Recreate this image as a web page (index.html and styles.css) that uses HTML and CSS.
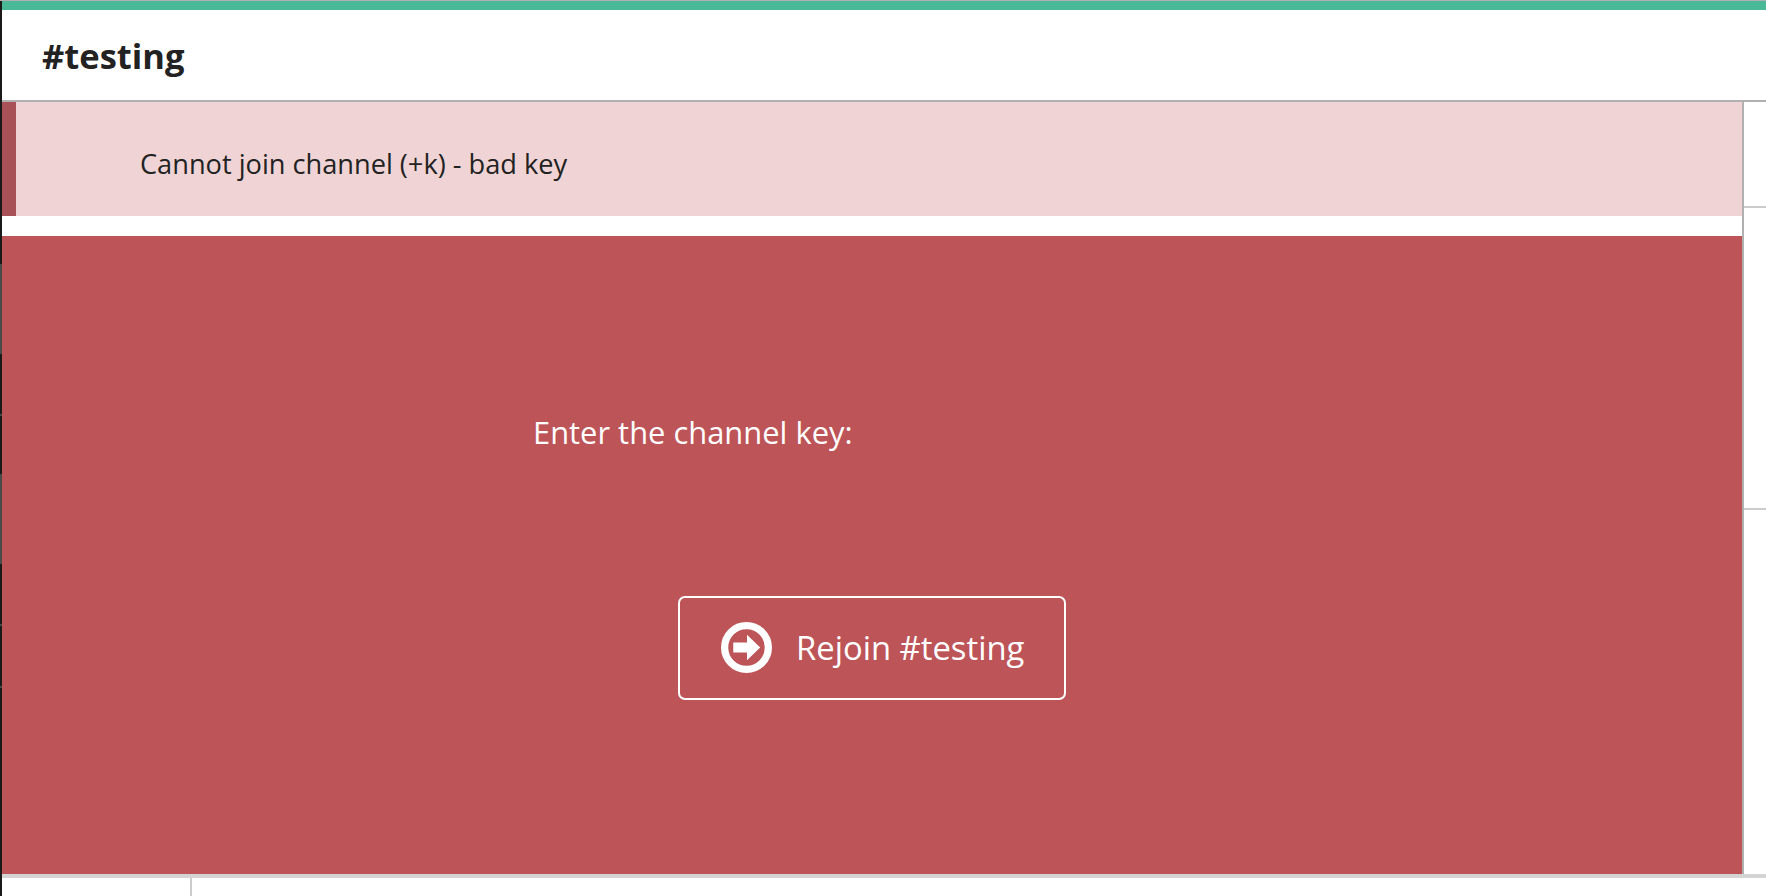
FILE: index.html
```html
<!DOCTYPE html>
<html lang="en">

<head>
    <meta charset="UTF-8">
    <meta name="viewport" content="width=device-width, initial-scale=1.0">
    <title>#testing</title>
    <link rel="stylesheet" href="styles.css">
</head>

<body>

    <div class="rail">
        <div class="rail-seg h44"></div>
        <div class="rail-seg lit h90"></div>
        <div class="rail-seg h60"></div>
        <div class="rail-seg lit h2"></div>
        <div class="rail-seg h58"></div>
        <div class="rail-seg lit h90"></div>
        <div class="rail-seg h60"></div>
        <div class="rail-seg lit h2"></div>
        <div class="rail-seg h60"></div>
        <div class="rail-seg lit h2"></div>
    </div>

    <div class="main">
        <header class="channel-header">
            <h1>#testing</h1>
        </header>

        <div class="channel-body">
            <section class="messages">
                <div class="message">
                    <p>Cannot join channel (+k) - bad key</p>
                </div>

                <div class="key-panel">
                    <p class="key-label">Enter the channel key:</p>
                    <button class="rejoin" type="button">
                        <svg class="rejoin-icon" viewBox="0 0 52 52" aria-hidden="true">
                            <circle cx="26" cy="26" r="22.300" fill="none" stroke="#fff" stroke-width="7.400" />
                            <path d="M12.500 21h14v-8l13.500 13-13.500 13v-8h-14z" fill="#fff" />
                        </svg>
                        <span>Rejoin #testing</span>
                    </button>
                </div>
            </section>

            <aside class="side">
                <div class="side-row first"></div>
                <div class="side-row second"></div>
                <div class="side-row"></div>
            </aside>
        </div>

        <footer class="controls">
            <div class="nick"></div>
            <div class="input"></div>
        </footer>
    </div>

</body>

</html>
```

FILE: styles.css
```css
* {
    margin: 0;
    padding: 0;
    box-sizing: border-box;
}

body {
    font-family: "Open Sans", Lato, sans-serif;
    background-color: #fff;
    color: #222;
    display: flex;
    height: 100vh;
    overflow: hidden;
    border-top: 1px solid #b0b0b0;
}

.rail {
    width: 2px;
    background-color: #1c1a19;
    padding-top: 219px;
    display: flex;
    flex-direction: column;
}

.rail-seg {
    background-color: #1c1a19;
}

.rail-seg.lit {
    background-color: #4a4a4a;
}

.h44 { height: 44px; }
.h90 { height: 90px; }
.h60 { height: 60px; }
.h58 { height: 58px; }
.h2 { height: 2px; }

.main {
    flex: 1;
    display: flex;
    flex-direction: column;
    min-width: 0;
}

.channel-header {
    height: 101px;
    border-top: 9px solid #4ab997;
    border-bottom: 2px solid #b0b0b0;
    padding-left: 40px;
    display: flex;
    align-items: center;
}

.channel-header h1 {
    font-size: 34.500px;
    font-weight: 700;
    color: #222;
}

.channel-body {
    flex: 1;
    display: flex;
    min-height: 0;
}

.messages {
    width: 1740px;
    display: flex;
    flex-direction: column;
}

.message {
    height: 114px;
    background-color: #f0d4d5;
    border-left: 14px solid #a85156;
    padding: 8px 0 0 124px;
    display: flex;
    align-items: center;
    font-size: 27.200px;
    margin-bottom: 20px;
}

.key-panel {
    flex: 1;
    background-color: #bd5458;
    color: #fff;
    display: flex;
    flex-direction: column;
}

.key-label {
    font-size: 30.900px;
    padding: 177px 0 0 531px;
    line-height: 38px;
}

.rejoin {
    align-self: center;
    margin-top: 145px;
    width: 388px;
    height: 104px;
    background: none;
    border: 2px solid #fff;
    border-radius: 7px;
    color: #fff;
    font-family: inherit;
    font-size: 32.800px;
    display: flex;
    align-items: center;
    gap: 24px;
    padding: 0 0 2px 41px;
}

.rejoin-icon {
    width: 51px;
    height: 51px;
}

.side {
    flex: 1;
    border-left: 2px solid #b0b0b0;
    display: flex;
    flex-direction: column;
}

.side-row {
    flex: 1;
    background-color: #fff;
}

.side-row.first {
    flex: none;
    height: 106px;
    border-bottom: 2px solid #cccccc;
}

.side-row.second {
    flex: none;
    height: 302px;
    border-bottom: 2px solid #cccccc;
}

.controls {
    height: 22px;
    border-top: 4px solid #d4d4d4;
    display: flex;
}

.nick {
    width: 190px;
    border-right: 2px solid #cccccc;
}

.input {
    flex: 1;
}
```
